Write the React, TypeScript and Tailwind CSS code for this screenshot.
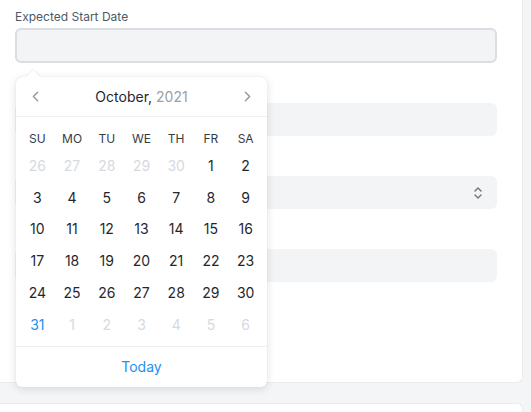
import React from 'react';
import { ChevronLeft, ChevronRight } from 'lucide-react';

const weekdays = ['SU', 'MO', 'TU', 'WE', 'TH', 'FR', 'SA'];

type Day = { n: number; muted?: boolean; today?: boolean };

const days: Day[] = [
  ...[26, 27, 28, 29, 30].map(n => ({ n, muted: true })),
  ...Array.from({ length: 30 }, (_, i) => ({ n: i + 1 })),
  { n: 31, today: true },
  ...[1, 2, 3, 4, 5, 6].map(n => ({ n, muted: true })),
];

// only the first label is visible, the rest sit under the popup
const fields = ['Expected Start Date', '', '', ''];

const SelectIcon = () => (
  <svg width="10" height="16" viewBox="0 0 10 16" fill="none" stroke="#6b7280" strokeWidth="1.4" strokeLinecap="round" strokeLinejoin="round">
    <path d="M2 6l3-3 3 3" />
    <path d="M2 10l3 3 3-3" />
  </svg>
);

const App: React.FC = () => {
  return (
    <div className="relative w-[531px] h-[412px] overflow-hidden bg-[#f4f5f6]" style={{ fontFamily: 'Inter, "Noto Sans", sans-serif' }}>
      {/* Form card */}
      <div className="w-[523px] h-[383px] bg-white rounded-br-md border-r border-b border-[#e9ebed] pl-[15px] pr-[25px] pt-[9px]">
        {fields.map((label, i) => (
          <div key={i} className="mb-[20px]">
            <div className="h-4 mb-1 text-xs leading-4 text-[#4c5a67]">{label}</div>
            {i === 0 ? (
              <div className="h-[35px] -mt-px rounded-md bg-[#f3f4f6] border-2 border-[#dadde1]" />
            ) : (
              <div className="h-[33px] rounded-md bg-[#f3f4f6] flex items-center justify-end pr-[14px]">
                {i === 2 && <SelectIcon />}
              </div>
            )}
          </div>
        ))}
      </div>

      {/* Next card */}
      <div className="mt-[20px] w-[523px] h-[40px] bg-white rounded-r-md border-r border-t border-[#e9ebed]" />

      {/* Datepicker popup */}
      <div className="absolute left-[16px] top-[77px] w-[251px] bg-white rounded-md shadow-[0_2px_10px_rgba(0,0,0,0.12),0_0_1px_rgba(0,0,0,0.15)]">
        <div className="absolute -top-[5px] left-[12px] w-[10px] h-[10px] bg-white rotate-45 shadow-[-1px_-1px_1px_rgba(0,0,0,0.05)]" />
        <div className="relative h-[40px] flex items-center justify-between px-[11px] border-b border-[#eef0f2]">
          <ChevronLeft size={17} color="#8d99a6" strokeWidth={2} />
          <div className="text-sm text-[#1f272e]">
            October, <span className="text-[#98a1a9]">2021</span>
          </div>
          <ChevronRight size={17} color="#8d99a6" strokeWidth={2} />
        </div>
        <div className="px-1 pt-[11px] pb-[5px]">
          <div className="grid grid-cols-7 h-[22px] items-center">
            {weekdays.map(w => (
              <div key={w} className="text-center text-xs text-[#333c44]">{w}</div>
            ))}
          </div>
          <div className="grid grid-cols-7">
            {days.map((d, i) => (
              <div
                key={i}
                className={`h-[31.8px] flex items-center justify-center text-sm ${
                  d.today ? 'text-[#2490ef]' : d.muted ? 'text-[#d6dadf]' : 'text-[#1f272e]'
                }`}
              >
                {d.n}
              </div>
            ))}
          </div>
        </div>
        <div className="h-[41px] border-t border-[#eef0f2] flex items-center justify-center text-sm text-[#2490ef]">
          Today
        </div>
      </div>
    </div>
  );
};

export default App;
